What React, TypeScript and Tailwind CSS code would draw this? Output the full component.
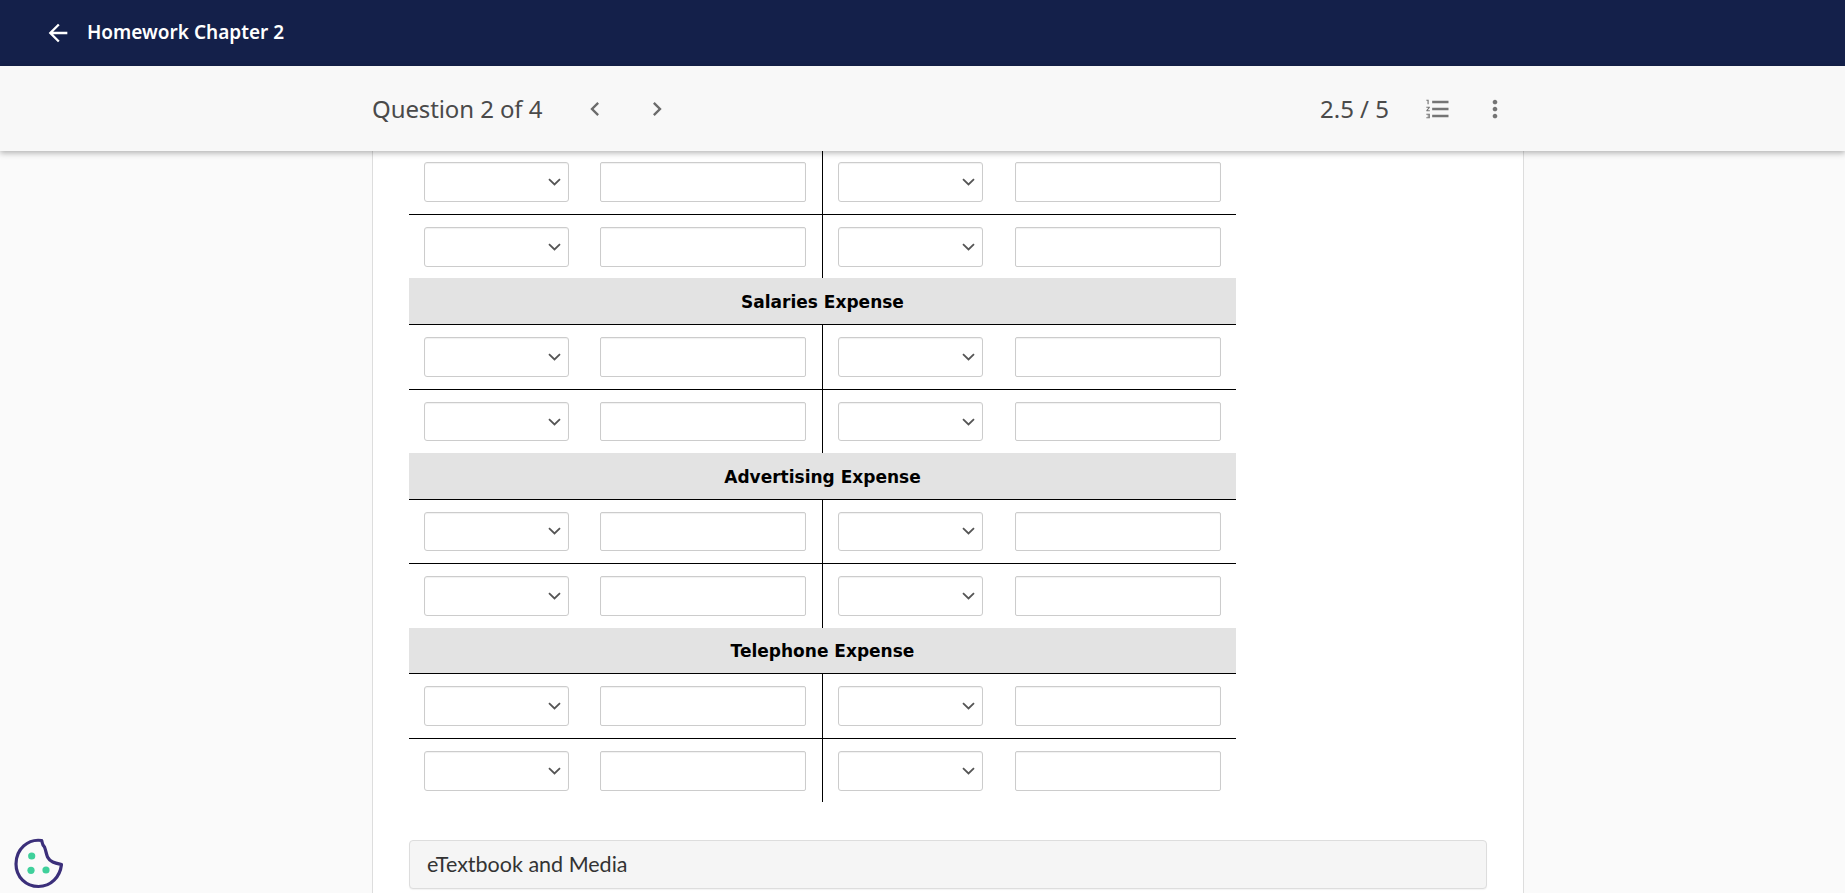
const accounts = ['Salaries Expense', 'Advertising Expense', 'Telephone Expense'];

function Chevron() {
  return (
    <svg className="pointer-events-none absolute right-[8px] top-1/2 -translate-y-1/2 w-[13px] h-[8px]" viewBox="0 0 13 8" fill="none">
      <path d="M1 1.2l5.5 5.3L12 1.2" stroke="#555" strokeWidth="1.8" />
    </svg>
  );
}

function Field({ gap }: { gap: string }) {
  return (
    <div className="flex flex-1 pl-[15px] pt-[12px]">
      <div className="relative w-[145px] h-[39.5px]">
        <select className="appearance-none block w-full h-full bg-white border border-[#ccc] rounded-[3px] shadow-[inset_0_1px_1px_rgba(0,0,0,0.06)]" />
        <Chevron />
      </div>
      <input className={`block ${gap} w-[206px] h-[39.5px] bg-white border border-[#ccc] rounded-[2px] shadow-[inset_0_1px_1px_rgba(0,0,0,0.06)]`} />
    </div>
  );
}

function LedgerRow({ height }: { height: string }) {
  return (
    <div className={`flex border-t border-black ${height}`}>
      <div className="w-[414px] border-r border-black flex">
        <Field gap="ml-[31px]" />
      </div>
      <div className="w-[413px] flex">
        <Field gap="ml-[32px]" />
      </div>
    </div>
  );
}

function Icon({ d, className }: { d: string; className: string }) {
  return (
    <svg className={className} viewBox="0 0 24 24" fill="currentColor">
      <path d={d} />
    </svg>
  );
}

export default function App() {
  return (
    <div className="relative h-[893px] overflow-hidden flex flex-col bg-[#fafafa] font-['Noto_Sans',sans-serif]">
      {/* Top bar */}
      <header className="h-[66px] shrink-0 bg-[#14204a] flex items-center pl-[44px] text-white">
        <Icon className="w-[28px] h-[28px]" d="M20 11H7.83l5.59-5.59L12 4l-8 8 8 8 1.41-1.41L7.83 13H20v-2z" />
        <span className="ml-[15px] pb-[2px] text-[19px] font-semibold">Homework Chapter 2</span>
      </header>

      {/* Question bar */}
      <div className="relative z-10 h-[85px] shrink-0 bg-[#f8f8f8] shadow-[0_2px_6px_rgba(0,0,0,0.3)] flex items-center pl-[372px] text-[#4a4a4a]">
        <span className="text-[24px] tracking-[-0.1px] w-[171px] whitespace-nowrap">Question 2 of 4</span>
        <Icon className="ml-[38px] w-[28px] h-[28px] text-[#6b6b6b]" d="M15.41 7.41L14 6l-6 6 6 6 1.41-1.41L10.83 12z" />
        <Icon className="ml-[34px] w-[28px] h-[28px] text-[#6b6b6b]" d="M10 6L8.59 7.41 13.17 12l-4.58 4.59L10 18l6-6z" />
        <span className="ml-auto text-[24px]">2.5 / 5</span>
        <Icon className="ml-[35px] w-[28px] h-[28px] text-[#757575]" d="M2 17h2v.5H3v1h1v.5H2v1h3v-4H2v1zm1-9h1V4H2v1h1v3zm-1 3h1.8L2 13.1v.9h3v-1H3.2L5 10.9V10H2v1zm5-6v2h14V5H7zm0 14h14v-2H7v2zm0-6h14v-2H7v2z" />
        <Icon className="ml-[29px] mr-[336px] w-[28px] h-[28px] text-[#757575]" d="M12 8c1.1 0 2-.9 2-2s-.9-2-2-2-2 .9-2 2 .9 2 2 2zm0 2c-1.1 0-2 .9-2 2s.9 2 2 2 2-.9 2-2-.9-2-2-2zm0 6c-1.1 0-2 .9-2 2s.9 2 2 2 2-.9 2-2-.9-2-2-2z" />
      </div>

      {/* Question content */}
      <main className="flex-1 overflow-hidden">
        <div className="ml-[372px] w-[1152px] h-full bg-white border-x border-[#ddd] px-[36px] overflow-hidden">
          <div className="w-[827px] -mt-[1.67px]">
            <LedgerRow height="h-[64.75px]" />
            <LedgerRow height="h-[64.25px]" />
            {accounts.map((name) => (
              <section key={name}>
                <div className="h-[45.67px] bg-[#e3e3e3] flex items-center justify-center pt-[3px] text-[17px] font-bold text-black font-['DejaVu_Sans',sans-serif]">
                  {name}
                </div>
                <LedgerRow height="h-[64.75px]" />
                <LedgerRow height="h-[64.25px]" />
              </section>
            ))}
          </div>

          <div className="mt-[37.7px] w-[1078px] h-[48.5px] bg-[#f5f5f5] border border-[#ddd] rounded-[4px] shadow-[0_1px_1px_rgba(0,0,0,0.05)] flex items-center pl-[17px] pb-[1px] text-[21.5px] text-[#333] font-['Lato',sans-serif]">
            eTextbook and Media
          </div>
        </div>
      </main>

      {/* Cookie settings */}
      <svg className="absolute left-0 bottom-0 w-[80px] h-[68px]" viewBox="0 0 80 68" fill="none">
        <path
          d="M41.7 15.5C28 13.5 16 24 16 39c0 13 10 22.5 22.5 22.5S60 52 61.5 39.5C55 38 50 37 47.5 32c-1.5-4-1.5-6-3-10-2.5-2-2-4-2.8-6.5z"
          stroke="#3b2f7a"
          strokeWidth="3.2"
          strokeLinejoin="round"
        />
        <circle cx="31.7" cy="31" r="3.6" fill="#3fd09b" />
        <circle cx="31" cy="45.3" r="3.6" fill="#3fd09b" />
        <circle cx="46" cy="45" r="3.6" fill="#3fd09b" />
      </svg>
    </div>
  );
}
